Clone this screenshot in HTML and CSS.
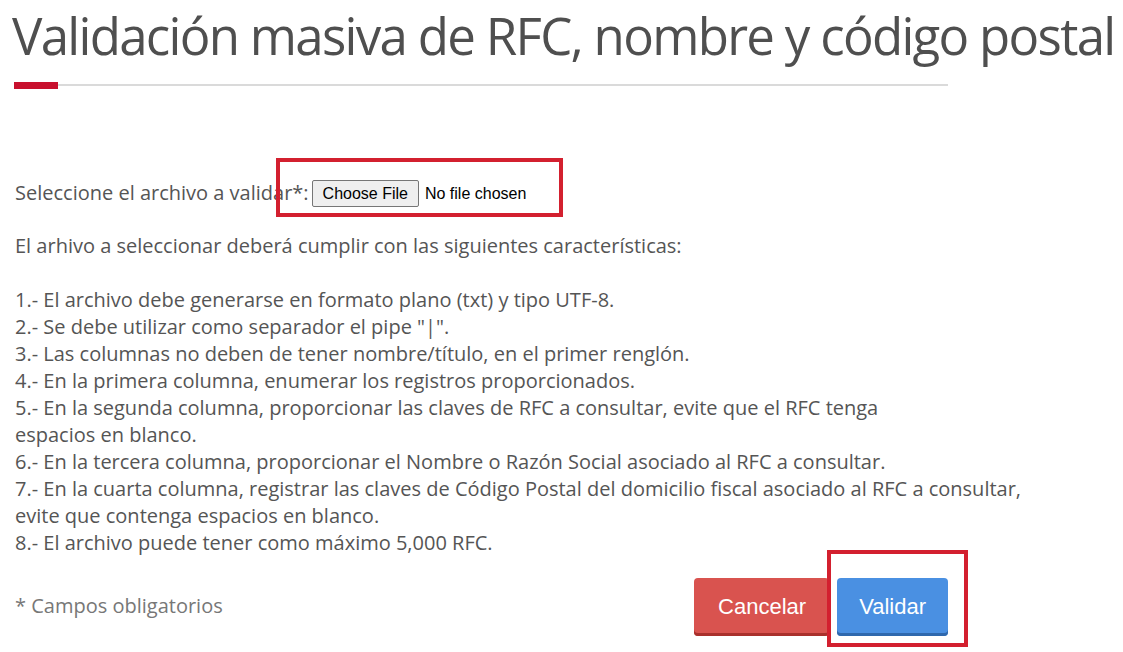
FILE: index.html
```html
<!DOCTYPE html>
<html lang="es">
<head>
<meta charset="utf-8">
<title>Validación masiva de RFC</title>
<link rel="stylesheet" href="styles.css">
</head>
<body>
<div class="page">
  <h1 class="title">Validación masiva de RFC, nombre y código postal</h1>
  <div class="divider"><span class="divider-mark"></span><span class="divider-line"></span></div>

  <div class="file-row">
    <span class="label">Seleccione el archivo a validar*:</span>
    <span class="file-input">
      <span class="file-btn">Choose File</span><span class="file-name">No file chosen</span>
      <span class="highlight highlight-file"></span>
    </span>
  </div>

  <p class="text intro">El arhivo a seleccionar deberá cumplir con las siguientes características:</p>

  <p class="text rules">1.- El archivo debe generarse en formato plano (txt) y tipo UTF-8.<br>
2.- Se debe utilizar como separador el pipe "|".<br>
3.- Las columnas no deben de tener nombre/título, en el primer renglón.<br>
4.- En la primera columna, enumerar los registros proporcionados.<br>
5.- En la segunda columna, proporcionar las claves de RFC a consultar, evite que el RFC tenga<br>
espacios en blanco.<br>
6.- En la tercera columna, proporcionar el Nombre o Razón Social asociado al RFC a consultar.<br>
7.- En la cuarta columna, registrar las claves de Código Postal del domicilio fiscal asociado al RFC a consultar,<br>
evite que contenga espacios en blanco.<br>
8.- El archivo puede tener como máximo 5,000 RFC.</p>

  <div class="footer">
    <span class="required">* Campos obligatorios</span>
    <div class="actions">
      <button class="btn btn-cancel" type="button">Cancelar</button>
      <button class="btn btn-validate" type="button">Validar</button>
      <span class="highlight highlight-validate"></span>
    </div>
  </div>
</div>
</body>
</html>
```

FILE: styles.css
```css
html, body {
  margin: 0;
  padding: 0;
  background: #ffffff;
}

.page {
  padding-left: 14px;
  padding-bottom: 16px;
  width: 934px;
  font-family: "Open Sans", "Liberation Sans", sans-serif;
  color: #555555;
}

.title {
  margin: 10px 0 0 -2px;
  font-size: 51px;
  line-height: 51px;
  font-weight: 500;
  color: #4f4f4f;
  white-space: nowrap;
  letter-spacing: -1.7px;
}

.divider {
  margin-top: 20px;
  height: 8px;
  display: flex;
  align-items: center;
}

.divider-mark {
  width: 44px;
  height: 7px;
  background: #c8102e;
}

.divider-line {
  flex: 1;
  height: 2px;
  background: #dadada;
}

.file-row {
  margin-top: 91px;
  height: 27px;
  display: flex;
  align-items: center;
  font-size: 20px;
  white-space: nowrap;
}

.label {
  margin-left: 1px;
  margin-top: -2px;
}

.file-input {
  position: relative;
  display: inline-flex;
  align-items: center;
  margin-left: 3px;
  font-family: "Liberation Sans", Arial, sans-serif;
  font-size: 16px;
  color: #000000;
}

.file-btn {
  box-sizing: border-box;
  height: 27px;
  padding: 0 10px;
  display: inline-flex;
  align-items: center;
  border: 1px solid #767676;
  border-radius: 2px;
  background: #efefef;
}

.file-name {
  margin-left: 6px;
}

.highlight {
  position: absolute;
  box-sizing: border-box;
  border: 4px solid #d3202f;
  pointer-events: none;
}

.highlight-file {
  left: -36px;
  top: -22px;
  width: 287px;
  height: 59px;
}

.text {
  margin: 0;
  font-size: 20px;
  line-height: 27px;
  padding-left: 1px;
  white-space: nowrap;
}

.intro {
  margin-top: 25px;
}

.rules {
  margin-top: 27px;
}

.footer {
  margin-top: 22px;
  display: flex;
  align-items: center;
  justify-content: space-between;
}

.required {
  color: #777777;
  font-size: 20px;
  padding-left: 1px;
  margin-top: -4px;
}

.actions {
  position: relative;
  display: flex;
  gap: 8px;
}

.btn {
  box-sizing: border-box;
  height: 58px;
  padding: 0 22px;
  border: none;
  border-radius: 4px;
  font-family: "Liberation Sans", Arial, sans-serif;
  font-size: 22px;
  color: #ffffff;
}

.btn-cancel {
  background: #d9534f;
  box-shadow: inset 0 -3px 0 #a9302c;
  padding: 0 23px 0 24px;
}

.btn-validate {
  background: #4a90e2;
  box-shadow: inset 0 -3px 0 #2f68ad;
}

.highlight-validate {
  right: -20px;
  top: -28px;
  width: 141px;
  height: 97px;
}
```
